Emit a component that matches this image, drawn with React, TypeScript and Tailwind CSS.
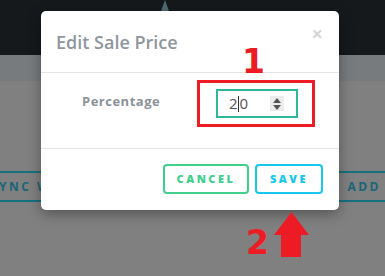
import React from "react";

const font = { fontFamily: '"Open Sans", "Noto Sans", sans-serif' };

function Spinner() {
  return (
    <div className="flex h-[15px] w-[14px] flex-col items-center justify-center gap-[2px] bg-[#ececec]">
      <svg width="8" height="5" viewBox="0 0 8 5">
        <polygon points="4,0 8,5 0,5" fill="#555" />
      </svg>
      <svg width="8" height="5" viewBox="0 0 8 5">
        <polygon points="0,0 8,0 4,5" fill="#555" />
      </svg>
    </div>
  );
}

export default function App() {
  return (
    <div
      className="relative h-[276px] w-[385px] overflow-hidden bg-[#808080]"
      style={font}
    >
      {/* page behind the overlay */}
      <div className="flex flex-col">
        <div className="relative h-[55px] bg-[#15191c]">
          <div className="absolute left-[161px] top-0 h-0 w-0 border-x-[4px] border-b-[11px] border-x-transparent border-b-[#4f6a70]" />
        </div>
        <div className="h-[26px] bg-[#787b7e]" />
        <div className="mt-[90px] flex items-center justify-between">
          <div className="-ml-[1px] flex h-[31px] items-center border-y-2 border-[#17707f] pr-6 text-[12px] font-bold tracking-[2.5px] text-[#1a6577]">
            YNC WITH
          </div>
          <div className="-mr-[30px] flex h-[31px] items-center border-y-2 border-[#17707f] pl-[14px] pr-2 text-[12px] font-bold tracking-[2.5px] text-[#1a6577]">
            ADD PR
          </div>
        </div>
      </div>

      {/* dialog */}
      <div className="absolute left-[41px] top-[11px] flex h-[199px] w-[298px] flex-col rounded-[5px] bg-white shadow-[0_4px_14px_rgba(0,0,0,0.35)]">
        <div className="flex h-[62px] items-center justify-between border-b border-[#e5e5e5] pl-[15px] pr-[16px]">
          <span className="pt-[2px] text-[18px] font-semibold text-[#8e979d]">
            Edit Sale Price
          </span>
          <span className="-mt-[16px] text-[20px] leading-none font-bold text-[#d6d6d6]">
            ×
          </span>
        </div>
        <div className="flex h-[76px] items-start border-b border-[#e5e5e5]">
          <span className="mt-[19px] ml-[41px] w-[134px] text-[13px] font-bold tracking-[0.5px] text-[#8a9399]">
            Percentage
          </span>
          <div className="mt-[16px] flex h-[29px] w-[82px] items-center border-2 border-[#2fb79c] pl-[11px] pr-[12px]">
            <span className="flex-1 text-[15px] text-[#555]">
              2<span className="mx-[0.5px] inline-block h-[16px] w-px translate-y-[3px] bg-[#333]" />0
            </span>
            <Spinner />
          </div>
        </div>
        <div className="flex flex-1 items-start justify-end gap-[6px] pt-[15px] pr-[16px]">
          <button className="flex h-[30px] w-[86px] items-center justify-center rounded-[4px] border-2 border-[#40d08c] text-[11px] font-extrabold tracking-[2.5px] text-[#40d08c]">
            CANCEL
          </button>
          <button className="flex h-[30px] w-[68px] items-center justify-center rounded-[4px] border-2 border-[#16c7ee] text-[11px] font-extrabold tracking-[2.5px] text-[#16c7ee]">
            SAVE
          </button>
        </div>
      </div>

      {/* annotations */}
      <div className="absolute left-[197px] top-[80px] h-[47px] w-[118px] border-[3px] border-[#ed1c24]" />
      <div
        className="absolute left-[242px] top-[45px] text-[33px] leading-none font-bold text-[#ed1c24]"
        style={{ fontFamily: '"DejaVu Sans", sans-serif' }}
      >
        1
      </div>
      <div
        className="absolute left-[246px] top-[226px] text-[33px] leading-none font-bold text-[#ed1c24]"
        style={{ fontFamily: '"DejaVu Sans", sans-serif' }}
      >
        2
      </div>
      <svg className="absolute left-[273px] top-[212px]" width="37" height="46" viewBox="0 0 37 46">
        <polygon points="18.5,0 36,23 28,23 28,45 8,45 8,23 1,23" fill="#ed1c24" />
      </svg>
    </div>
  );
}
